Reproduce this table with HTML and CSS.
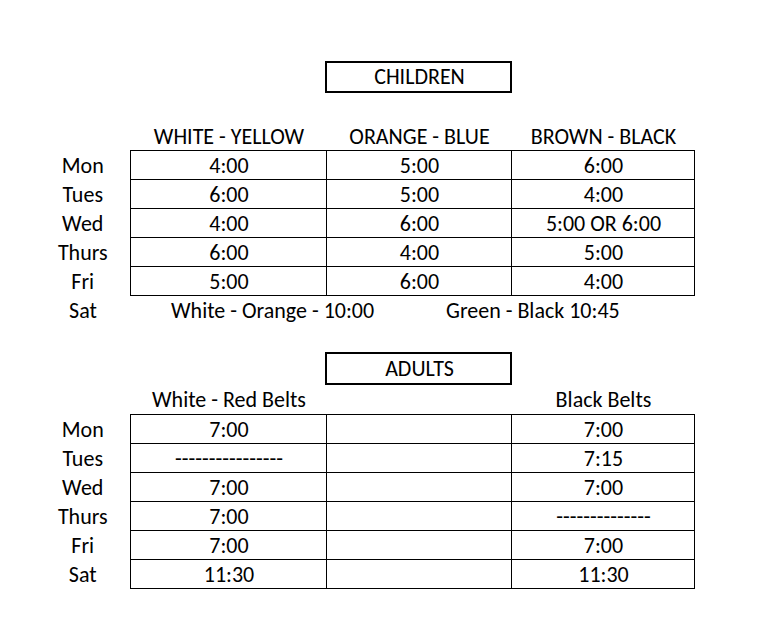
FILE: index.html
```html
<!DOCTYPE html>
<html>
<head>
<meta charset="utf-8">
<link rel="stylesheet" href="styles.css">
</head>
<body>
<table class="sheet">
  <colgroup>
    <col class="c-day"><col class="c-b"><col class="c-c"><col class="c-d">
  </colgroup>
  <tr class="r-title"><td></td><td></td><td class="box">CHILDREN</td><td></td></tr>
  <tr class="r-gap"><td colspan="4"></td></tr>
  <tr class="r-head"><td></td><td>WHITE - YELLOW</td><td>ORANGE - BLUE</td><td>BROWN - BLACK</td></tr>
  <tr class="r-data"><td class="day">Mon</td><td class="cell">4:00</td><td class="cell">5:00</td><td class="cell">6:00</td></tr>
  <tr class="r-data"><td class="day">Tues</td><td class="cell">6:00</td><td class="cell">5:00</td><td class="cell">4:00</td></tr>
  <tr class="r-data"><td class="day">Wed</td><td class="cell">4:00</td><td class="cell">6:00</td><td class="cell">5:00 OR 6:00</td></tr>
  <tr class="r-data"><td class="day">Thurs</td><td class="cell">6:00</td><td class="cell">4:00</td><td class="cell">5:00</td></tr>
  <tr class="r-data"><td class="day">Fri</td><td class="cell">5:00</td><td class="cell">6:00</td><td class="cell">4:00</td></tr>
  <tr class="r-data"><td class="day">Sat</td><td colspan="3" class="sat"><div class="sat-line"><span class="sat-a">White - Orange - 10:00</span><span class="sat-b">Green - Black 10:45</span></div></td></tr>
  <tr class="r-gap"><td colspan="4"></td></tr>
  <tr class="r-title2"><td></td><td></td><td class="box">ADULTS</td><td></td></tr>
  <tr class="r-head2"><td></td><td>White - Red Belts</td><td></td><td>Black Belts</td></tr>
  <tr class="r-data"><td class="day">Mon</td><td class="cell">7:00</td><td class="cell"></td><td class="cell">7:00</td></tr>
  <tr class="r-data"><td class="day">Tues</td><td class="cell">----------------</td><td class="cell"></td><td class="cell">7:15</td></tr>
  <tr class="r-data"><td class="day">Wed</td><td class="cell">7:00</td><td class="cell"></td><td class="cell">7:00</td></tr>
  <tr class="r-data"><td class="day">Thurs</td><td class="cell">7:00</td><td class="cell"></td><td class="cell">--------------</td></tr>
  <tr class="r-data"><td class="day">Fri</td><td class="cell">7:00</td><td class="cell"></td><td class="cell">7:00</td></tr>
  <tr class="r-data"><td class="day">Sat</td><td class="cell">11:30</td><td class="cell"></td><td class="cell">11:30</td></tr>
</table>
</body>
</html>
```

FILE: styles.css
```css
html, body {
  margin: 0;
  padding: 0;
  background: #ffffff;
}

body {
  font-family: "Carlito", "Lato", "Liberation Sans", sans-serif;
  font-size: 22px;
  color: #000000;
}

.sheet {
  border-collapse: collapse;
  table-layout: fixed;
  margin: 61px 0 0 34px;
  width: 660px;
}

.c-day { width: 96px; }
.c-b { width: 196px; }
.c-c { width: 185px; }
.c-d { width: 183px; }

.sheet td {
  padding: 3px 0 0 2px;
  text-align: center;
  vertical-align: middle;
  white-space: nowrap;
  line-height: 22px;
}

.r-title { height: 30px; }
.r-title2 { height: 31px; }
.r-gap { height: 29px; }
.r-head { height: 29px; }
.r-head2 { height: 30px; }
.r-data { height: 29px; }

.sheet .box {
  border: 2px solid #000000;
  padding-top: 0;
}

.cell {
  border: 1px solid #000000;
}

.sat {
  text-align: left !important;
}

.sat-line {
  display: flex;
  padding-left: 39px;
}

.sat-a {
  width: 275px;
}
```
